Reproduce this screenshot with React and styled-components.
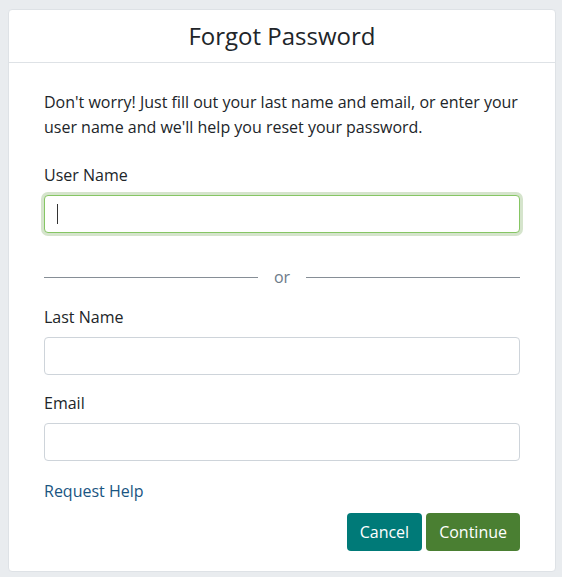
import React from 'react';
import styled, { createGlobalStyle } from 'styled-components';

const GlobalStyle = createGlobalStyle`
  html, body {
    margin: 0;
    padding: 0;
    background: #e9ecef;
  }
  body {
    font-family: "Open Sans", "Noto Sans", sans-serif;
    color: #212529;
  }
  * { box-sizing: border-box; }
`;

function App() {
    return (
        <>
            <GlobalStyle />
            <Page>
                <Card>
                    <Header>
                        <Title>Forgot Password</Title>
                    </Header>
                    <Body>
                        <Intro>
                            Don't worry! Just fill out your last name and email, or enter your
                            user name and we'll help you reset your password.
                        </Intro>
                        <Field>
                            <Label htmlFor="username">User Name</Label>
                            <InputWrap>
                                <Input id="username" focused />
                                <Caret />
                            </InputWrap>
                        </Field>
                        <Divider>
                            <Line />
                            <DividerText>or</DividerText>
                            <Line />
                        </Divider>
                        <Field>
                            <Label htmlFor="lastname">Last Name</Label>
                            <Input id="lastname" />
                        </Field>
                        <Field>
                            <Label htmlFor="email">Email</Label>
                            <Input id="email" />
                        </Field>
                        <HelpLink href="#">Request Help</HelpLink>
                        <Actions>
                            <Button variant="cancel">Cancel</Button>
                            <Button variant="continue">Continue</Button>
                        </Actions>
                    </Body>
                </Card>
            </Page>
        </>
    )
}

export default App

const Page = styled.div`
    padding: 9px 6px 5px 8px;
`;

const Card = styled.div`
    width: 548px;
    background: #fff;
    border: 1px solid #dee2e6;
    border-radius: 4px;
`;

const Header = styled.div`
    height: 53px;
    border-bottom: 1px solid #dee2e6;
    display: flex;
    align-items: center;
    justify-content: center;
`;

const Title = styled.h1`
    margin: 0;
    font-size: 24px;
    font-weight: 400;
    color: #212529;
    line-height: 1.2;
`;

const Body = styled.div`
    padding: 27px 35px 20px 35px;
    display: flex;
    flex-direction: column;
`;

const Intro = styled.p`
    margin: 0 0 23px 0;
    font-size: 16px;
    line-height: 25px;
`;

const Field = styled.div`
    display: flex;
    flex-direction: column;
    margin-bottom: 16px;
`;

const Label = styled.label`
    font-size: 16px;
    line-height: 24px;
    margin-bottom: 8px;
`;

const InputWrap = styled.div`
    position: relative;
`;

const Input = styled.input`
    width: 100%;
    height: 38px;
    border: 1px solid ${p => (p.focused ? '#86c664' : '#ced4da')};
    border-radius: 4px;
    box-shadow: ${p => (p.focused ? '0 0 0 3px #d5e4cc' : 'none')};
    outline: none;
    font-family: inherit;
    font-size: 16px;
    padding: 6px 12px;
    background: #fff;
`;

const Caret = styled.span`
    position: absolute;
    left: 13px;
    top: 9px;
    width: 1px;
    height: 20px;
    background: #333;
`;

const Divider = styled.div`
    display: flex;
    align-items: center;
    height: 24px;
    margin: 16px 0;
`;

const Line = styled.div`
    flex: 1;
    height: 1px;
    background: #868e96;
`;

const DividerText = styled.span`
    width: 48px;
    font-size: 16px;
    line-height: 24px;
    color: #6c7a89;
    text-align: center;
`;

const HelpLink = styled.a`
    font-size: 16px;
    line-height: 24px;
    color: #1a5582;
    text-decoration: none;
    align-self: flex-start;
    margin-top: 2px;
    margin-bottom: 10px;
`;

const Actions = styled.div`
    display: flex;
    justify-content: flex-end;
    gap: 4px;
`;

const Button = styled.button`
    height: 38px;
    padding: 0 13px;
    border: none;
    border-radius: 4px;
    font-family: inherit;
    font-size: 16px;
    color: #fff;
    cursor: pointer;
    background: ${p => (p.variant === 'cancel' ? '#007a78' : '#4a7f32')};
`;
